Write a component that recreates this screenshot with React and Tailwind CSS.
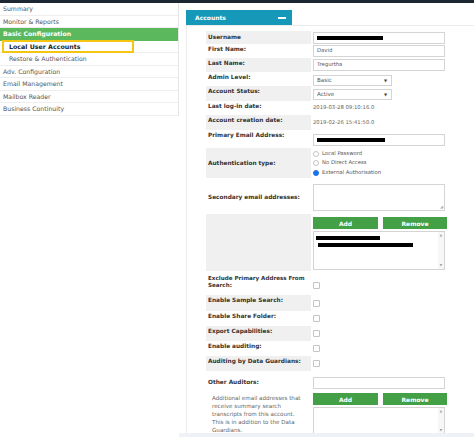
import { useState } from "react";

const navItems = [
  { label: "Summary" },
  { label: "Monitor & Reports" },
  { label: "Basic Configuration", group: true },
  { label: "Local User Accounts", active: true },
  { label: "Restore & Authentication", sub: true },
  { label: "Adv. Configuration" },
  { label: "Email Management" },
  { label: "Mailbox Reader" },
  { label: "Business Continuity" },
];

function Redacted({ w, className = "" }) {
  return <div className={`h-[4px] bg-black ${className}`} style={{ width: w }} />;
}

function TextInput({ children, className = "" }) {
  return (
    <div
      className={`h-[12px] w-[132px] border border-[#d4d4d4] bg-white px-[3px] flex items-center text-[5.3px] text-[#555] ${className}`}
    >
      {children}
    </div>
  );
}

function Select({ value, className = "" }) {
  return (
    <div
      className={`h-[11px] w-[79px] border border-[#d4d4d4] bg-white pl-[3px] pr-[4px] flex items-center justify-between text-[5.6px] text-[#555] ${className}`}
    >
      <span>{value}</span>
      <span className="text-[4px] text-[#444]">▼</span>
    </div>
  );
}

function Checkbox() {
  return <div className="mt-auto mb-[1px] h-[7px] w-[7px] rounded-[1px] border border-[#c4c4c4] bg-white" />;
}

function Radio({ checked, label }) {
  return (
    <div className="flex items-center gap-[3px] h-[9.5px]">
      <div
        className={`h-[6px] w-[6px] rounded-full border ${
          checked ? "border-[#1a73e8] bg-[#1a73e8]" : "border-[#c4c4c4] bg-white"
        }`}
      />
      <span className="text-[5.3px] text-[#555]">{label}</span>
    </div>
  );
}

function ListBox({ h, children }) {
  return (
    <div className="flex w-[132px] border border-[#d4d4d4] bg-white" style={{ height: h }}>
      <div className="flex-1 pt-[4px] pl-[1px] flex flex-col gap-[3px]">{children}</div>
      <div className="w-[6px] flex flex-col justify-between items-center py-[2px] bg-[#f7f7f7]">
        <span className="text-[3px] leading-none text-[#999]">▲</span>
        <span className="text-[3px] leading-none text-[#999]">▼</span>
      </div>
    </div>
  );
}

function Buttons() {
  return (
    <div className="flex gap-[5px]">
      <button className="h-[12px] w-[65px] bg-[#43a047] text-white text-[6px] font-bold">Add</button>
      <button className="h-[12px] w-[64px] bg-[#43a047] text-white text-[6px] font-bold">Remove</button>
    </div>
  );
}

function Row({ label, shaded, h, labelClass = "pt-[2px]", valueClass = "", children }) {
  return (
    <div className="flex" style={{ height: h }}>
      <div
        className={`w-[105px] shrink-0 pl-[2px] text-[5.8px] font-bold leading-[7px] text-[#333] ${
          shaded ? "bg-[#f0f0f0]" : ""
        } ${labelClass}`}
      >
        {label}
      </div>
      <div className={`ml-[2px] flex ${valueClass}`}>{children}</div>
    </div>
  );
}

export default function App() {
  const [open] = useState(true);

  return (
    <div
      className="w-[474px] h-[437px] overflow-hidden bg-white flex flex-col"
      style={{ fontFamily: '"DejaVu Sans", Verdana, sans-serif' }}
    >
      <div className="h-[3px] bg-[#1c2733] shrink-0" />
      <div className="flex flex-1 min-h-0">
        <nav className="w-[179px] shrink-0 self-start border-r border-[#e6e6e6]">
          {navItems.map((item) =>
            item.active ? (
              <div key={item.label} className="h-[12.5px] border-b border-[#eeeeee] flex items-center">
                <div className="ml-[2px] w-[132px] h-[13px] border-2 border-[#f3c614] flex items-center pl-[5px] text-[6.3px] font-bold text-[#222]">
                  {item.label}
                </div>
              </div>
            ) : (
              <div
                key={item.label}
                className={`h-[12.5px] flex items-center border-b text-[6.2px] ${
                  item.group
                    ? "bg-[#5cb85c] border-[#5cb85c] text-white font-bold pl-[3px]"
                    : "border-[#eeeeee] text-[#555]"
                } ${item.sub ? "pl-[9px]" : item.group ? "" : "pl-[3px]"}`}
              >
                {item.label}
              </div>
            )
          )}
        </nav>

        <main className="flex-1 min-w-0 flex flex-col pl-[7px] pt-[7px]">
          <div className="w-[106px] h-[15px] bg-[#1699b8] flex items-center justify-between pl-[9px] pr-[4px] text-white text-[6px] font-bold shrink-0">
            <span>Accounts</span>
            <span className="w-[8px] h-[2px] bg-white mr-[2px]" />
          </div>
          {open && (
            <div className="flex-1 min-h-0 border-t border-l border-[#ececec] pl-[19px] pt-[5px] overflow-hidden">
              <Row label="Username" shaded h="13px" labelClass="flex items-center">
                <TextInput className="mt-[1px]">
                  <Redacted w="66px" />
                </TextInput>
              </Row>
              <Row label="First Name:" h="14px" valueClass="items-end pb-[1px]">
                <TextInput>David</TextInput>
              </Row>
              <Row label="Last Name:" shaded h="14px" valueClass="items-end pb-[1px]">
                <TextInput>Tregurtha</TextInput>
              </Row>
              <Row label="Admin Level:" h="14px" valueClass="items-end">
                <Select value="Basic" />
              </Row>
              <Row label="Account Status:" shaded h="15px" valueClass="items-end pb-[1px]">
                <Select value="Active" />
              </Row>
              <Row label="Last log-in date:" h="14px" valueClass="items-end pb-[3px]">
                <span className="text-[5.3px] text-[#666]">2019-03-28 09:10:16.0</span>
              </Row>
              <Row label="Account creation date:" shaded h="15px" valueClass="items-end pb-[3px]">
                <span className="text-[5.3px] text-[#666]">2019-02-26 15:41:50.0</span>
              </Row>
              <Row label="Primary Email Address:" h="16px" valueClass="items-end">
                <TextInput>
                  <Redacted w="68px" />
                </TextInput>
              </Row>
              <div className="h-[2px]" />
              <Row
                label="Authentication type:"
                shaded
                h="30px"
                labelClass="flex items-center"
                valueClass="flex-col pt-[1px]"
              >
                <Radio label="Local Password" />
                <Radio label="No Direct Access" />
                <Radio checked label="External Authorisation" />
              </Row>
              <div className="h-[4px]" />
              <Row
                label="Secondary email addresses:"
                h="31px"
                labelClass="flex items-center"
                valueClass="pt-[2px]"
              >
                <div className="relative h-[27px] w-[132px] border border-[#d4d4d4] bg-white">
                  <div className="absolute right-[1px] bottom-[1px] text-[4px] leading-none text-[#aaa]">◢</div>
                </div>
              </Row>
              <div className="h-[1px]" />
              <Row label="" shaded h="57px" valueClass="flex-col gap-[2px] pt-[3px]">
                <Buttons />
                <ListBox h="39px">
                  <Redacted w="64px" className="ml-[1px]" />
                  <Redacted w="95px" className="ml-[3px]" />
                </ListBox>
              </Row>
              <div className="h-[2px]" />
              <Row
                label={<span className="text-[5.6px]">Exclude Primary Address From Search:</span>}
                h="19px"
                labelClass="pt-[2px]"
                valueClass="pb-[2px]"
              >
                <Checkbox />
              </Row>
              <div className="h-[3px]" />
              <Row label="Enable Sample Search:" shaded h="16px" valueClass="pb-[3px]">
                <Checkbox />
              </Row>
              <Row label="Enable Share Folder:" h="15px" valueClass="pb-[3px]">
                <Checkbox />
              </Row>
              <Row label="Export Capabilities:" shaded h="15px" valueClass="pb-[3px]">
                <Checkbox />
              </Row>
              <Row label="Enable auditing:" h="15px" valueClass="pb-[3px]">
                <Checkbox />
              </Row>
              <Row label="Auditing by Data Guardians:" shaded h="15px" valueClass="pb-[3px]">
                <Checkbox />
              </Row>
              <div className="h-[2px]" />
              <Row label="Other Auditors:" h="19px" labelClass="flex items-center" valueClass="items-center">
                <TextInput />
              </Row>
              <Row
                label={
                  <span className="block w-[96px] font-normal text-[5.6px] leading-[8px] text-[#666] pl-[4px]">
                    Additional email addresses that receive summary search transcripts from this account. This is in
                    addition to the Data Guardians.
                  </span>
                }
                h="48px"
                labelClass="pt-[2px]"
                valueClass="flex-col gap-[2px] pt-[1px]"
              >
                <Buttons />
                <ListBox h="28px" />
              </Row>
            </div>
          )}
          <div className="h-[4px] bg-[#eef2f6] shrink-0 -ml-[7px]" />
        </main>
      </div>
    </div>
  );
}
